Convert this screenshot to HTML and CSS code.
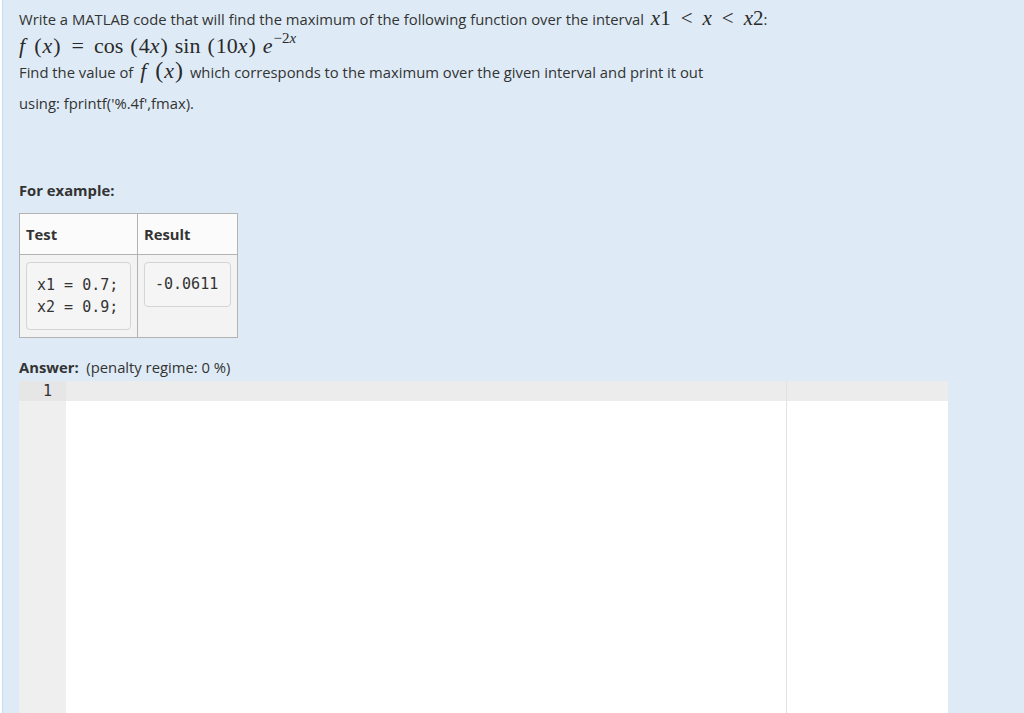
FILE: index.html
```html
<!DOCTYPE html>
<html lang="en">
<head>
    <meta charset="UTF-8">
    <meta name="viewport" content="width=device-width, initial-scale=1.0">
    <title>MATLAB question</title>
    <link rel="stylesheet" href="styles.css">
</head>
<body>

    <div class="formulation">
        <div class="qtext">
            <p class="line-first">Write a MATLAB code that will find the maximum of the following function over the interval <span class="math math-inline"><i>x</i>1<span class="rel">&lt;</span><i>x</i><span class="rel">&lt;</span><i>x</i>2</span>:</p>
            <div class="math math-display">
                <i>f</i><span class="gap"></span><span class="paren">(</span><i>x</i><span class="paren">)</span><span class="rel">=</span>cos<span class="gap-s"></span><span class="paren">(</span>4<i>x</i><span class="paren">)</span><span class="gap-s"></span>sin<span class="gap-s"></span><span class="paren">(</span>10<i>x</i><span class="paren">)</span><span class="gap-s"></span><i>e</i><sup>&minus;2<i>x</i></sup>
            </div>
            <p class="line-find">Find the value of <span class="math math-big"><i>f</i><span class="gap"></span><span class="paren">(</span><i>x</i><span class="paren">)</span></span> which corresponds to the maximum over the given interval and print it out</p>
            <p class="line-using">using: fprintf('%.4f',fmax).</p>
        </div>

        <h4 class="for-example">For example:</h4>
        <table class="examples">
            <thead>
                <tr>
                    <th class="col-test">Test</th>
                    <th class="col-result">Result</th>
                </tr>
            </thead>
            <tbody>
                <tr>
                    <td class="col-test"><pre>x1 = 0.7;
x2 = 0.9;</pre></td>
                    <td class="col-result"><pre>-0.0611</pre></td>
                </tr>
            </tbody>
        </table>

        <div class="answer-label"><b>Answer:</b>&nbsp; (penalty regime: 0 %)</div>
        <div class="editor">
            <div class="gutter">
                <div class="gutter-cell active">1</div>
            </div>
            <div class="content">
                <div class="active-line"></div>
                <div class="print-margin"></div>
            </div>
        </div>
    </div>

</body>
</html>
```

FILE: styles.css
```css
html, body {
    margin: 0;
    height: 100%;
}

body {
    font-family: "Open Sans", "Liberation Sans", sans-serif;
    font-size: 14.8px;
    color: #333;
    background-color: #fff;
    overflow: hidden;
}

.formulation {
    margin-left: 2px;
    border-left: 1px solid #c9dcec;
    background-color: #deebf6;
    height: 100%;
    padding: 8px 0 0 16px;
    box-sizing: border-box;
    overflow: hidden;
}

.qtext p {
    margin: 0;
}

.line-first {
    line-height: 22px;
}

/* math, set in a serif to stand in for the TeX fonts */
.math {
    font-family: "Liberation Serif", "DejaVu Serif", serif;
    color: #2a2a2a;
    line-height: 1;
    white-space: nowrap;
}

.math i {
    font-style: italic;
}

.math-inline {
    font-size: 21px;
    margin-left: 3px;
}

.math-display {
    font-size: 22px;
    height: 26px;
    line-height: 28px;
    margin-top: 2px;
}

.math-display sup {
    font-size: 15px;
    vertical-align: 10px;
    line-height: 0;
    margin-left: 1px;
}

.math-big {
    font-size: 22px;
    margin: 0 2px 0 3px;
}

.math-big .paren {
    font-size: 24px;
}

.rel {
    padding: 0 10px;
}

.math-inline .rel {
    padding: 0 10px;
}

.paren {
    padding: 0 1px;
}

.gap {
    display: inline-block;
    width: 8px;
}

.gap-s {
    display: inline-block;
    width: 6px;
}

.line-find {
    line-height: 28px;
}

.line-using {
    line-height: 22px;
    margin-top: 6px !important;
}

.for-example {
    font-size: 14.8px;
    font-weight: bold;
    margin: 65px 0 0 0;
    line-height: 22px;
}

.examples {
    border-collapse: collapse;
    margin-top: 12px;
    font-size: 14.8px;
}

.examples th,
.examples td {
    border: 1px solid #b3b3b3;
    padding: 7px 6px;
    text-align: left;
    vertical-align: top;
}

.examples th {
    background-color: #fbfbfb;
    height: 26px;
    line-height: 26px;
    font-weight: bold;
}

.examples td {
    background-color: #f3f3f3;
}

.col-test {
    width: 105px;
}

.col-result {
    width: 87px;
}

.examples pre {
    margin: 0;
    font-family: "DejaVu Sans Mono", monospace;
    font-size: 15px;
    line-height: 22px;
    padding: 11px 10px;
    border: 1px solid #d4d4d4;
    border-radius: 4px;
    background-color: #f5f5f5;
}

.col-result pre {
    padding: 10px 10px 11px;
}

.answer-label {
    margin-top: 18px;
    line-height: 22px;
}

.editor {
    display: flex;
    width: 929px;
    height: 400px;
    margin-top: 3px;
    background-color: #fff;
}

.gutter {
    width: 47px;
    background-color: #efefef;
    font-family: "DejaVu Sans Mono", monospace;
    font-size: 15px;
}

.gutter-cell {
    height: 20px;
    line-height: 20px;
    text-align: right;
    padding-right: 14px;
}

.gutter-cell.active {
    background-color: #e6e6e6;
}

.content {
    flex: 1;
    position: relative;
}

.active-line {
    height: 20px;
    background-color: #ececec;
}

.print-margin {
    position: absolute;
    top: 0;
    bottom: 0;
    left: 720px;
    width: 1px;
    background-color: #e2e2e2;
}
```
